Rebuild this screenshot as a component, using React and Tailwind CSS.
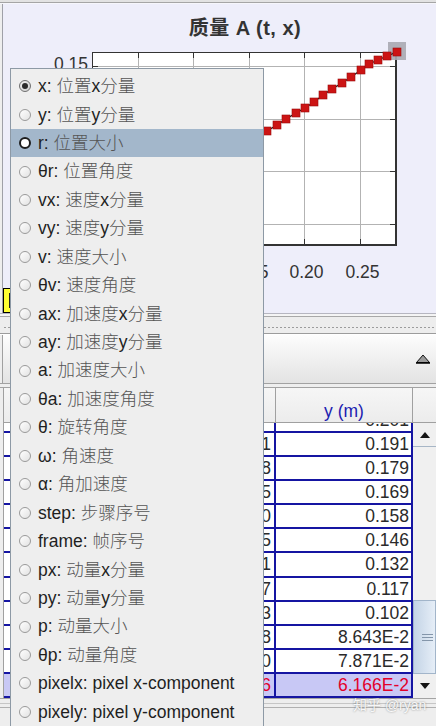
import React from "react";

const ITEMS = [
  "x: 位置x分量",
  "y: 位置y分量",
  "r: 位置大小",
  "θr: 位置角度",
  "vx: 速度x分量",
  "vy: 速度y分量",
  "v: 速度大小",
  "θv: 速度角度",
  "ax: 加速度x分量",
  "ay: 加速度y分量",
  "a: 加速度大小",
  "θa: 加速度角度",
  "θ: 旋转角度",
  "ω: 角速度",
  "α: 角加速度",
  "step: 步骤序号",
  "frame: 帧序号",
  "px: 动量x分量",
  "py: 动量y分量",
  "p: 动量大小",
  "θp: 动量角度",
  "pixelx: pixel x-component",
  "pixely: pixel y-component",
];

const ROWS = [
  ["1", "0.191"],
  ["8", "0.179"],
  ["5", "0.169"],
  ["0", "0.158"],
  ["5", "0.146"],
  ["1", "0.132"],
  ["7", "0.117"],
  ["3", "0.102"],
  ["8", "8.643E-2"],
  ["0", "7.871E-2"],
  ["6", "6.166E-2"],
];

function Label({ text }) {
  const parts = text.split(/([\u4e00-\u9fff]+)/).filter(Boolean);
  return (
    <span className="whitespace-pre">
      {parts.map((p, i) =>
        /[\u4e00-\u9fff]/.test(p) ? (
          <span key={i} className="font-light text-[#555555]">{p}</span>
        ) : (
          <span key={i} className="text-[#1f1f1f]">{p}</span>
        )
      )}
    </span>
  );
}

function Radio({ state }) {
  if (state === "checked") {
    return (
      <span className="flex h-[12px] w-[12px] shrink-0 items-center justify-center rounded-full border border-[#6e6e6e] bg-linear-to-br from-[#f2f2f2] to-[#cfcfcf]">
        <span className="h-[6px] w-[6px] rounded-full bg-[#2b2b2b]" />
      </span>
    );
  }
  if (state === "hover") {
    return (
      <span className="h-[12px] w-[12px] shrink-0 rounded-full border-2 border-[#1e1e1e] bg-white" />
    );
  }
  return (
    <span className="h-[12px] w-[12px] shrink-0 rounded-full border border-[#9a9a9a] bg-linear-to-br from-[#ffffff] to-[#e2e2e2]" />
  );
}

function Popup() {
  return (
    <div className="absolute left-[10px] top-[68px] w-[254px] border border-[#8d99a5] bg-[#eeeeee] pt-[3px] font-['Liberation_Sans','Noto_Sans_CJK_SC',sans-serif] text-[17.5px]">
      {ITEMS.map((t, i) => (
        <div
          key={t}
          className={
            "flex h-[28.45px] items-center gap-[7px] pl-[8px] " +
            (i === 2 ? "bg-[#a3b7cb]" : "")
          }
        >
          <Radio state={i === 0 ? "checked" : i === 2 ? "hover" : "off"} />
          <Label text={t} />
        </div>
      ))}
    </div>
  );
}

function Chart() {
  const gx = [135.5, 190.5, 246.5, 301.5, 357.5];
  const gy = [14.5, 67.5, 119.5, 172.5];
  const abs = [
    [174, 186],
    [183, 181],
    [192, 175],
    [202, 170],
    [211, 164],
    [220, 159],
    [230, 153],
    [239, 147],
    [248, 142],
    [258, 136],
    [267, 131],
    [277, 125],
    [286, 119],
    [296, 113],
    [305, 108],
    [314, 102],
    [323, 95],
    [332, 89],
    [342, 83],
    [351, 77],
    [361, 70],
    [369, 64],
    [378, 60],
    [387, 56],
    [397, 52],
  ];
  const pts = abs.map(([x, y]) => [x - 3, y - 52]);
  const last = pts[pts.length - 1];
  return (
    <svg width="433" height="261" className="block overflow-visible">
      <rect x="89.5" y="0.5" width="304" height="193" fill="#ffffff" stroke="#333333" strokeWidth="1" />
      {gx.map((x) => (
        <line key={"gx" + x} x1={x} y1="0" x2={x} y2="193" stroke="#b3b3b3" strokeWidth="1" />
      ))}
      {gy.map((y) => (
        <line key={"gy" + y} x1="90" y1={y} x2="393" y2={y} stroke="#b3b3b3" strokeWidth="1" />
      ))}
      {gy.map((y) => (
        <g key={"ty" + y}>
          <line x1="89" y1={y} x2="95" y2={y} stroke="#333" strokeWidth="1" />
          <line x1="387" y1={y} x2="393" y2={y} stroke="#333" strokeWidth="1" />
        </g>
      ))}
      {gx.map((x) => (
        <g key={"tx" + x}>
          <line x1={x} y1="187" x2={x} y2="193" stroke="#333" strokeWidth="1" />
          <line x1={x} y1="0" x2={x} y2="6" stroke="#333" strokeWidth="1" />
        </g>
      ))}
      <line x1="89" y1="193" x2="394" y2="193" stroke="#333333" strokeWidth="2" />
      <line x1="393" y1="0" x2="393" y2="194" stroke="#333333" strokeWidth="2" />
      <text x="85" y="18" textAnchor="end" fontFamily="Liberation Sans, sans-serif" fontSize="17.5" fill="#333333">
        0.15
      </text>
      {[
        [246.5, "0.15"],
        [301.5, "0.20"],
        [357.5, "0.25"],
      ].map(([x, t]) => (
        <text
          key={"xl" + t}
          x={x + 2}
          y="226"
          textAnchor="middle"
          fontFamily="Liberation Sans, sans-serif"
          fontSize="17.5"
          fill="#333333"
        >
          {t}
        </text>
      ))}
      <rect x={last[0] - 9} y={last[1] - 10} width="18" height="18" fill="#a9a9b1" opacity="0.9" />
      <polyline
        points={pts.map((p) => p.join(",")).join(" ")}
        fill="none"
        stroke="#111111"
        strokeWidth="1.3"
      />
      {pts.map(([x, y], i) => (
        <rect
          key={"p" + i}
          x={x - 4}
          y={y - 4}
          width="8"
          height="8"
          fill="#cc1414"
          stroke="#9a0a0a"
          strokeWidth="0.6"
        />
      ))}
      <rect x="0.5" y="236.5" width="8" height="24" fill="#ffff33" stroke="#000000" strokeWidth="1" />
      <rect x="6" y="241" width="2" height="15" fill="#222" />
    </svg>
  );
}

function TriUp() {
  return (
    <svg width="16" height="10" viewBox="0 0 16 10">
      <polygon points="8,1 14.5,8.5 1.5,8.5" fill="#9a9a9a" stroke="#111" strokeWidth="1" />
      <line x1="1" y1="9" x2="15" y2="9" stroke="#000" strokeWidth="1.5" />
    </svg>
  );
}

function Arrow({ up }) {
  return (
    <svg width="12" height="8" viewBox="0 0 12 8">
      {up ? (
        <polygon points="6,1 11,7 1,7" fill="#141414" />
      ) : (
        <polygon points="1,1 11,1 6,7" fill="#141414" />
      )}
    </svg>
  );
}

export default function App() {
  return (
    <div className="relative h-[726px] w-[436px] overflow-hidden bg-[#eeeeee] font-['Liberation_Sans','Noto_Sans_CJK_SC',sans-serif]">
      {/* top edge */}
      <div className="h-[2px] bg-[#e2e2e2]" />
      <div className="h-[1px] bg-[#a5a5a5]" />
      <div className="h-[1px] bg-[#f6f6fb]" />

      {/* chart panel */}
      <div className="ml-[2px] h-[309px] border-l border-[#9fa0a8] bg-[#eeeefa]">
        <div className="ml-[89px] h-[48px] w-[306px] pt-[12px] text-center text-[20px] font-bold leading-[24px] tracking-[0.5px] text-[#333333]">
          质量 A (t, x)
        </div>
        <Chart />
      </div>

      {/* split divider */}
      <div className="h-[1px] bg-[#b6b6c0]" />
      <div className="h-[2px] bg-[#f4f4f4]" />
      <div className="h-[1px] bg-[#a8a8a8]" />
      <div className="flex h-[16px] items-center bg-[#ededed] pl-[3px]">
        <div className="mt-[4px] h-[3px] w-full bg-[radial-gradient(circle,#9c9c9c_0.8px,transparent_1px)] bg-[length:4px_3px]" />
      </div>
      <div className="h-[1px] bg-[#9c9c9c]" />
      <div className="h-[1px] bg-[#ffffff]" />

      {/* toolbar */}
      <div className="ml-[2px] flex h-[48px] items-center justify-end border-l border-[#a0a0a0] bg-linear-to-b from-[#fdfdfd] to-[#e3e3e3] pr-[5px]">
        <TriUp />
      </div>
      <div className="h-[1px] bg-[#a2a2a2]" />
      <div className="h-[3px] bg-[#eeeeee]" />
      <div className="h-[1px] bg-[#a2a2a2]" />

      {/* table header */}
      <div className="ml-[3px] flex h-[35px] border-b border-l border-[#a0a0a0] bg-linear-to-b from-[#f6f6f6] to-[#ececec]">
        <div className="w-[272px] border-r border-[#a0a0a0]" />
        <div className="w-[137px] border-r border-[#a0a0a0] pt-[13px] text-center text-[17.5px] leading-[20px] text-[#1c1cb0]">
          y (m)
        </div>
        <div className="flex-1" />
      </div>

      {/* table body */}
      <div className="ml-[3px] flex">
        <div className="w-[410px] border-l border-[#a0a0a0] text-[17.5px] text-[#2a2a2a]">
          <div className="flex h-[10px] overflow-hidden border-b-2 border-[#1515a2] bg-white">
            <div className="w-[272px] border-r-2 border-[#1515a2]" />
            <div className="flex-1 border-r-2 border-[#1515a2]">
              <div className="-mt-[15px] h-[24px] pr-[2px] text-right leading-[24px]">0.201</div>
            </div>
          </div>
          {ROWS.map(([a, b], i) => {
            const sel = i === ROWS.length - 1;
            return (
              <div
                key={b}
                className={
                  "flex h-[24.1px] border-b-2 border-[#1515a2] leading-[22px] " +
                  (sel ? "bg-[#c8c8f5] text-[#e3002a]" : "bg-white")
                }
              >
                <div className="w-[272px] border-r-2 border-[#1515a2] pr-[3px] text-right">{a}</div>
                <div className="flex-1 border-r-2 border-[#1515a2] pr-[2px] text-right">{b}</div>
              </div>
            );
          })}
        </div>

        {/* scrollbar */}
        <div className="flex h-[275px] flex-1 flex-col bg-[#f0f0f0]">
          <div className="flex h-[24px] items-center justify-center border-b border-[#a7b6c6]">
            <Arrow up />
          </div>
          <div className="h-[153px]" />
          <div className="flex h-[74px] flex-col items-center justify-center gap-[2px] border border-[#a2b5ca] bg-linear-to-r from-[#c4d4e6] to-[#e6eef7] pl-[6px]">
            <div className="h-[1px] w-[11px] bg-[#8496aa]" />
            <div className="h-[1px] w-[11px] bg-[#8496aa]" />
            <div className="h-[1px] w-[11px] bg-[#8496aa]" />
          </div>
          <div className="flex flex-1 items-center justify-center">
            <Arrow />
          </div>
        </div>
      </div>

      {/* below table */}
      <div className="h-[1px] bg-[#a4a4a4]" />
      <div className="h-[4px] bg-[#eeeeee]" />
      <div className="h-[1px] bg-[#c6c6c6]" />
      <div className="h-[3px] bg-[#eeeeee]" />
      <div className="h-[1px] bg-[#b0b0b0]" />

      <Popup />

      <div className="absolute left-[353px] top-[695px] text-[14px] leading-[20px] text-white/90 [text-shadow:0_0_2px_rgba(0,0,0,0.45)]">
        知乎 @ryan
      </div>
    </div>
  );
}
